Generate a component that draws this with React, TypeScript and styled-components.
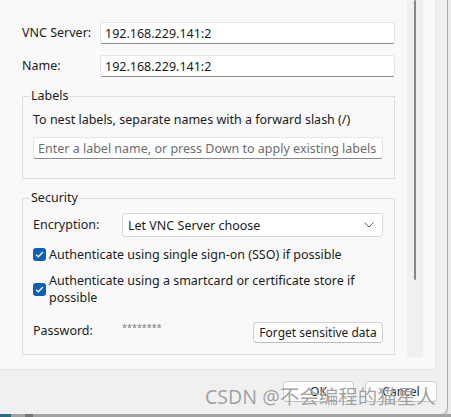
import React from "react";
import styled, { createGlobalStyle } from "styled-components";

const GlobalStyle = createGlobalStyle`
  html, body {
    margin: 0;
    padding: 0;
    background: #e9e9e9;
  }
  body {
    font-family: "Noto Sans", "Noto Sans CJK SC", sans-serif;
    font-size: 12.5px;
    color: #1b1b1b;
  }
`;

const Screen = styled.div`
  width: 451px;
  height: 417px;
  display: flex;
  flex-direction: column;
  overflow: hidden;
  position: relative;
`;

const WindowRow = styled.div`
  display: flex;
  height: 414px;
`;

const Dialog = styled.div`
  width: 447px;
  display: flex;
  flex-direction: column;
  background: #f0f0f0;
  border-right: 1px solid #a9a9a9;
  border-bottom-right-radius: 7px;
  box-shadow: 1px 1px 2px rgba(0, 0, 0, 0.15);
`;

const Body = styled.div`
  height: 370px;
  display: flex;
`;

const Panel = styled.div`
  width: 435px;
  height: 369px;
  display: flex;
  background: #f9f9f9;
  border-right: 1px solid #e6e6e6;
  border-bottom: 1px solid #e3e3e3;
`;

const Form = styled.div`
  width: 373px;
  padding: 22px 0 0 22px;
  display: flex;
  flex-direction: column;
`;

const FieldRow = styled.div<{ $gap?: number; $height?: number }>`
  display: flex;
  align-items: center;
  height: ${(p) => p.$height ?? 22}px;
  margin-bottom: ${(p) => p.$gap ?? 0}px;
`;

const Label = styled.span<{ $width: number }>`
  width: ${(p) => p.$width}px;
  flex: none;
  line-height: 16px;
`;

const TextInput = styled.div<{ $placeholder?: boolean }>`
  flex: 1;
  height: 22px;
  box-sizing: border-box;
  background: #fff;
  border: 1px solid #e4e4e4;
  border-bottom-color: #8a8a8a;
  border-radius: 3px;
  padding: 0 4px;
  display: flex;
  align-items: center;
  color: ${(p) => (p.$placeholder ? "#6d6d6d" : "#1b1b1b")};
  white-space: nowrap;
  overflow: hidden;
`;

const Group = styled.fieldset<{ $top: number; $bottom: number }>`
  margin: ${(p) => p.$top}px 0 0 0;
  padding: 8px 11px ${(p) => p.$bottom}px 10px;
  border: 1px solid #dedede;
  min-width: 0;
`;

const Legend = styled.legend`
  padding: 0 1px;
  margin-left: -3px;
  line-height: 16px;
`;

const Hint = styled.div`
  line-height: 16px;
  margin-bottom: 9px;
  white-space: nowrap;
`;

const SelectBox = styled.div`
  flex: 1;
  height: 24px;
  box-sizing: border-box;
  background: #fff;
  border: 1px solid #d8d8d8;
  border-radius: 3px;
  padding: 0 8px 0 5px;
  display: flex;
  align-items: center;
  justify-content: space-between;
`;

const CheckRow = styled.div`
  display: flex;
  align-items: center;
  gap: 3px;
  margin-top: 9px;
  line-height: 17px;
`;

const Box = styled.span`
  width: 13px;
  height: 13px;
  flex: none;
  border-radius: 3px;
  background: #0c60b8;
  display: flex;
  align-items: center;
  justify-content: center;
`;

const PasswordRow = styled.div`
  display: flex;
  align-items: flex-start;
  margin-top: 16px;
  height: 21px;
`;

const PasswordLabel = styled.span`
  width: 89px;
  line-height: 16px;
  margin-top: 1px;
`;

const Stars = styled.span`
  flex: 1;
  color: #777;
  font-size: 9px;
  line-height: 10px;
  margin-top: 1px;
`;

const Button = styled.div<{ $width: number }>`
  width: ${(p) => p.$width}px;
  height: 21px;
  box-sizing: border-box;
  background: #fdfdfd;
  border: 1px solid #d0d0d0;
  border-bottom-color: #bcbcbc;
  border-radius: 4px;
  display: flex;
  align-items: center;
  justify-content: center;
  color: #1b1b1b;
  font-size: 12px;
  white-space: nowrap;
`;

const ScrollTrack = styled.div`
  width: 16px;
  height: 357px;
  margin-left: 12px;
  background: #f0f0f0;
  display: flex;
  justify-content: center;
`;

const ScrollThumb = styled.div`
  width: 2px;
  height: 280px;
  background: #878787;
  border-radius: 1px;
`;

const Footer = styled.div`
  flex: 1;
  display: flex;
  justify-content: flex-end;
  align-items: flex-start;
  gap: 11px;
  padding: 11px 10px 0 0;
`;

const RightEdge = styled.div`
  width: 3px;
  background: #ececec;
`;

const Taskbar = styled.div`
  height: 3px;
  display: flex;
  background: #a2a2a2;
`;

const TaskSlot = styled.div<{ $width: number; $color: string }>`
  width: ${(p) => p.$width}px;
  background: ${(p) => p.$color};
`;

const Watermark = styled.div`
  position: absolute;
  left: 205px;
  top: 384px;
  font-family: "Noto Sans", "Noto Sans CJK SC", sans-serif;
  font-size: 19.5px;
  line-height: 26px;
  color: rgba(130, 130, 130, 0.75);
  text-shadow: 0 0 1px rgba(255, 255, 255, 0.9);
  white-space: nowrap;
  pointer-events: none;
`;

const Chevron = () => (
  <svg width="10" height="6" viewBox="0 0 10 6">
    <path d="M0.5 0.5 L5 5 L9.5 0.5" fill="none" stroke="#5f5f5f" strokeWidth="1" />
  </svg>
);

const Check = () => (
  <svg width="9" height="7" viewBox="0 0 9 7">
    <path d="M1 3.6 L3.3 5.8 L8 1" fill="none" stroke="#fff" strokeWidth="1.3" />
  </svg>
);

export default function App() {
  return (
    <Screen>
      <GlobalStyle />
      <WindowRow>
        <Dialog>
          <Body>
            <Panel>
              <Form>
                <FieldRow $gap={11}>
                  <Label $width={78}>VNC Server:</Label>
                  <TextInput>192.168.229.141:2</TextInput>
                </FieldRow>
                <FieldRow>
                  <Label $width={78}>Name:</Label>
                  <TextInput>192.168.229.141:2</TextInput>
                </FieldRow>

                <Group $top={11} $bottom={19}>
                  <Legend>Labels</Legend>
                  <Hint>To nest labels, separate names with a forward slash (/)</Hint>
                  <TextInput $placeholder>
                    Enter a label name, or press Down to apply existing labels
                  </TextInput>
                </Group>

                <Group $top={11} $bottom={11}>
                  <Legend>Security</Legend>
                  <FieldRow $height={24} style={{ marginTop: -1 }}>
                    <Label $width={89}>Encryption:</Label>
                    <SelectBox>
                      <span>Let VNC Server choose</span>
                      <Chevron />
                    </SelectBox>
                  </FieldRow>
                  <CheckRow>
                    <Box>
                      <Check />
                    </Box>
                    <span>Authenticate using single sign-on (SSO) if possible</span>
                  </CheckRow>
                  <CheckRow>
                    <Box>
                      <Check />
                    </Box>
                    <span>
                      Authenticate using a smartcard or certificate store if
                      <br />
                      possible
                    </span>
                  </CheckRow>
                  <PasswordRow>
                    <PasswordLabel>Password:</PasswordLabel>
                    <Stars>********</Stars>
                    <Button $width={130}>Forget sensitive data</Button>
                  </PasswordRow>
                </Group>
              </Form>
              <ScrollTrack>
                <ScrollThumb />
              </ScrollTrack>
            </Panel>
          </Body>
          <Footer>
            <Button $width={71}>OK</Button>
            <Button $width={72}>Cancel</Button>
          </Footer>
        </Dialog>
        <RightEdge />
      </WindowRow>
      <Taskbar>
        <TaskSlot $width={11} $color="#2b6b7c" />
        <TaskSlot $width={14} $color="#a2a2a2" />
        <TaskSlot $width={8} $color="#767676" />
      </Taskbar>
      <Watermark>CSDN @不会编程的猫星人</Watermark>
    </Screen>
  );
}
